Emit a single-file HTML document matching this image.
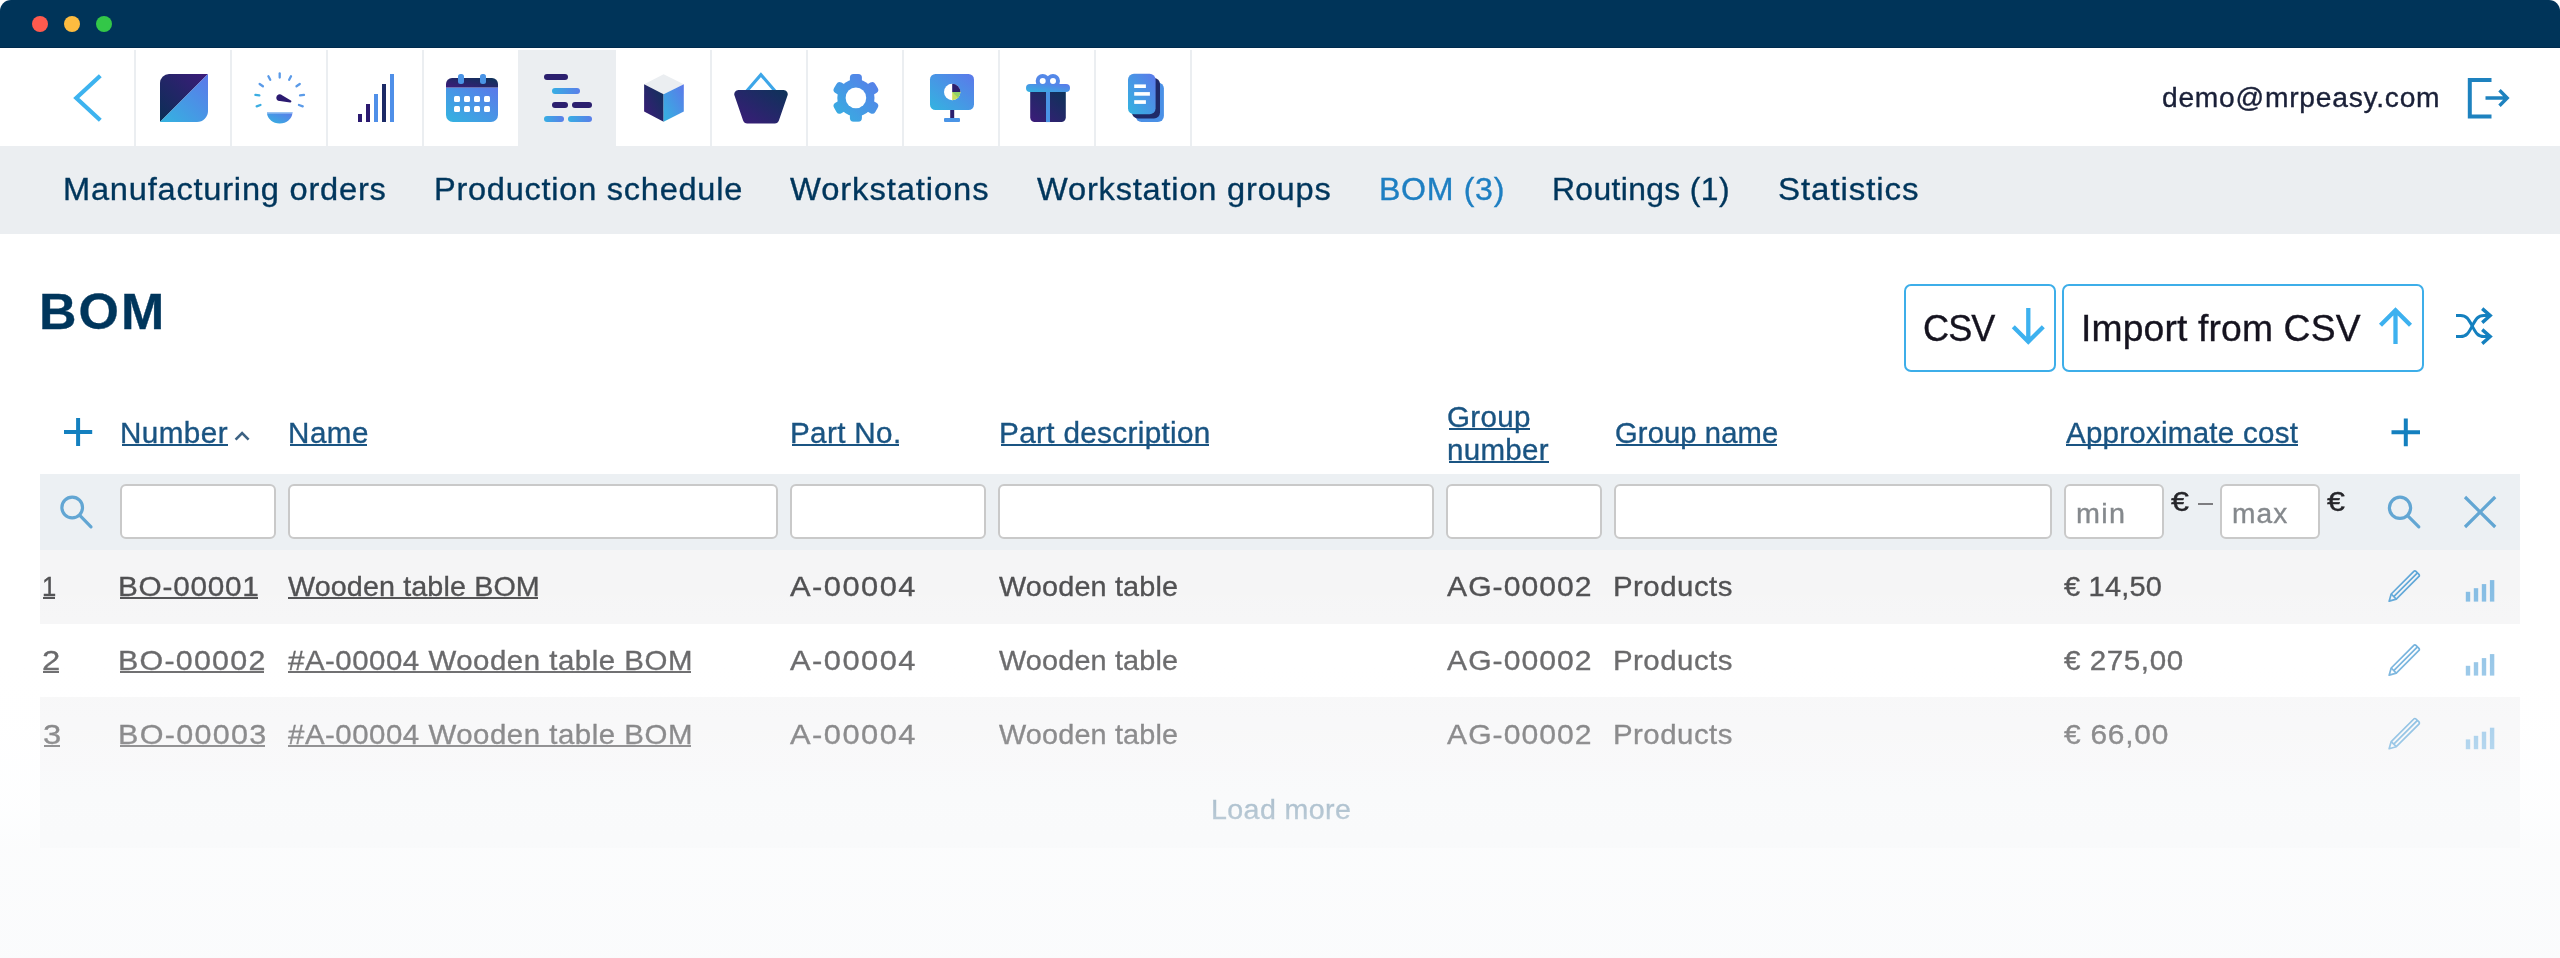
<!DOCTYPE html>
<html lang="en">
<head>
<meta charset="utf-8">
<title>BOM</title>
<style>
*{box-sizing:border-box;margin:0;padding:0}
html,body{width:2560px;height:958px;overflow:hidden;background:#fff}
body{font-family:"Liberation Sans",sans-serif;position:relative;color:#00365c}
.abs{position:absolute}
#titlebar{left:0;top:0;width:2560px;height:48px;background:#003459;border-radius:11px 11px 0 0;border-bottom:1px solid #002b4e}
.dot{width:16px;height:16px;border-radius:50%;top:16px}
#toolbar{left:0;top:48px;width:2560px;height:98px;background:#fff}
.sep{top:50px;width:2px;height:96px;background:#ebeef1}
#active{left:518px;top:50px;width:98px;height:96px;background:#ebeef1}
#nav{left:0;top:146px;width:2560px;height:88px;background:#ebeef1}
.btn{top:284px;height:88px;border:2px solid #3daee9;border-radius:7px;background:#fff}
#filter{left:40px;top:474px;width:2480px;height:76px;background:#ecf0f3}
.inp{top:484.400px;height:55px;background:#fff;border:2px solid #c9c9c9;border-radius:6px}
.row{left:40px;width:2480px;height:74px}
.t{white-space:nowrap;transform-origin:0 50%;-webkit-text-stroke:.35px currentColor}
#fade{left:0;top:540px;width:2560px;height:418px;pointer-events:none;background:linear-gradient(to bottom,rgba(255,255,255,0) 0,rgba(255,255,255,.03) 46px,rgba(255,255,255,.18) 120px,rgba(254,254,255,.36) 194px,rgba(252,253,254,.6) 270px,rgba(250,251,252,.78) 310px,rgba(250,251,252,.92) 418px)}
</style>
</head>
<body>
<div id="titlebar" class="abs"></div>
<div class="abs dot" style="left:32px;background:#ff5a4e"></div>
<div class="abs dot" style="left:64px;background:#fdbc40"></div>
<div class="abs dot" style="left:96px;background:#33c748"></div>

<div id="toolbar" class="abs"></div>
<div id="active" class="abs"></div>
<div class="abs sep" style="left:134px"></div>
<div class="abs sep" style="left:230px"></div>
<div class="abs sep" style="left:326px"></div>
<div class="abs sep" style="left:422px"></div>
<div class="abs sep" style="left:710px"></div>
<div class="abs sep" style="left:806px"></div>
<div class="abs sep" style="left:902px"></div>
<div class="abs sep" style="left:998px"></div>
<div class="abs sep" style="left:1094px"></div>
<div class="abs sep" style="left:1190px"></div>
<svg class="abs" style="left:0;top:0" width="2560" height="150" viewBox="0 0 2560 150">
<defs>
<linearGradient id="gb" x1="0" y1="1" x2="1" y2="0"><stop offset="0" stop-color="#33b4e0"/><stop offset="1" stop-color="#5c78ea"/></linearGradient>
<linearGradient id="gd" x1="0" y1="1" x2="1" y2="0"><stop offset="0" stop-color="#3d1b7a"/><stop offset="1" stop-color="#0c3358"/></linearGradient>
<linearGradient id="gd2" x1="0" y1="1" x2="1" y2="0"><stop offset="0" stop-color="#0a2f55"/><stop offset="1" stop-color="#3d1b7a"/></linearGradient>
</defs>
<!-- back -->
<polyline points="100.3,75.800 76.300,98 100.300,120.200" fill="none" stroke="#3db3ef" stroke-width="4.2" stroke-linecap="butt" stroke-linejoin="miter"/>
<!-- logo -->
<path d="M160 122V83a9 9 0 0 1 9-9h39z" fill="url(#gd2)"/>
<path d="M160 122L208 74v37a11 11 0 0 1-11 11z" fill="url(#gb)"/>
<!-- gauge -->
<g transform="translate(279.7 98)" stroke="#5a9ae8" stroke-width="2.300" stroke-linecap="round">
<line x1="0" y1="-20.5" x2="0" y2="-24.500"/>
<line x1="0" y1="-20.5" x2="0" y2="-24.500" transform="rotate(27.5)"/><line x1="0" y1="-20.5" x2="0" y2="-24.500" transform="rotate(-27.5)"/>
<line x1="0" y1="-20.5" x2="0" y2="-24.500" transform="rotate(55)"/><line x1="0" y1="-20.5" x2="0" y2="-24.500" transform="rotate(-55)"/>
<line x1="0" y1="-20.5" x2="0" y2="-24.500" transform="rotate(82.5)"/><line x1="0" y1="-20.5" x2="0" y2="-24.500" transform="rotate(-82.5)" stroke="#3bade2"/>
<line x1="0" y1="-20.5" x2="0" y2="-24.500" transform="rotate(110)"/><line x1="0" y1="-20.5" x2="0" y2="-24.500" transform="rotate(-110)" stroke="#3bade2"/>
</g>
<path d="M276.300 97.600a3.400 3.400 0 0 1 5.800-2.300l8.800 5.200a1.100 1.100 0 0 1-.8 2l-10.200-1.500a3.400 3.400 0 0 1-3.600-3.400z" fill="#2b1a70"/>
<path d="M267 112.200h25.400a12.700 11.400 0 0 1-25.400 0z" fill="url(#gb)"/>
<rect x="267" y="112" width="25.400" height="1.600" fill="#9cc4f2"/>
<!-- bars -->
<rect x="358" y="114" width="4" height="8" fill="#2b1a70"/>
<rect x="366" y="104" width="4" height="18" fill="#2b1a70"/>
<rect x="374" y="94" width="4" height="28" fill="#4f8fe8"/>
<rect x="382" y="84" width="4" height="38" fill="#1c2a66"/>
<rect x="390" y="74" width="4" height="48" fill="#4f8fe8"/>
<!-- calendar -->
<path d="M446 87.500h52v27.500a7 7 0 0 1-7 7h-38a7 7 0 0 1-7-7z" fill="url(#gb)"/>
<path d="M446 87.500v-3.500a6 6 0 0 1 6-6h40a6 6 0 0 1 6 6v3.500z" fill="url(#gd)"/>
<rect x="458" y="74" width="6" height="10" rx="2.500" fill="#4a94e6"/><rect x="480" y="74" width="6" height="10" rx="2.500" fill="#4a94e6"/>
<g fill="#fff"><rect x="454" y="96" width="6" height="6" rx="1.500"/><rect x="464" y="96" width="6" height="6" rx="1.500"/><rect x="474" y="96" width="6" height="6" rx="1.500"/><rect x="484" y="96" width="6" height="6" rx="1.500"/>
<rect x="454" y="106" width="6" height="6" rx="1.500"/><rect x="464" y="106" width="6" height="6" rx="1.500"/><rect x="474" y="106" width="6" height="6" rx="1.500"/><rect x="484" y="106" width="6" height="6" rx="1.500"/></g>
<!-- gantt -->
<g stroke-width="6" stroke-linecap="round" fill="none">
<line x1="547" y1="77" x2="565" y2="77" stroke="#2b1f6e"/>
<line x1="555" y1="91" x2="577" y2="91" stroke="url(#gbh)"/>
<line x1="555" y1="105" x2="565" y2="105" stroke="#2b1f6e"/><line x1="575" y1="105" x2="589" y2="105" stroke="#2b1f6e"/>
<line x1="547" y1="119" x2="561" y2="119" stroke="url(#gbh2)"/><line x1="571" y1="119" x2="589" y2="119" stroke="url(#gbh3)"/>
</g>
<defs>
<linearGradient id="gbh" gradientUnits="userSpaceOnUse" x1="552" y1="0" x2="580" y2="0"><stop offset="0" stop-color="#36aee3"/><stop offset="1" stop-color="#5a7ee9"/></linearGradient>
<linearGradient id="gbh2" gradientUnits="userSpaceOnUse" x1="544" y1="0" x2="564" y2="0"><stop offset="0" stop-color="#36aee3"/><stop offset="1" stop-color="#5a7ee9"/></linearGradient>
<linearGradient id="gbh3" gradientUnits="userSpaceOnUse" x1="568" y1="0" x2="592" y2="0"><stop offset="0" stop-color="#36aee3"/><stop offset="1" stop-color="#5a7ee9"/></linearGradient>
</defs>
<!-- cube -->
<path d="M663.600 74.200L683.800 84.200L663.600 94.200L644.100 84.200z" fill="#ebeef1"/>
<path d="M644.100 84.200L663.600 94.200V121.800L644.100 111.600z" fill="url(#gd)"/>
<path d="M683.800 84.200L663.600 94.200V121.800L683.800 111.600z" fill="url(#gb)"/>
<!-- basket -->
<polyline points="746.800,91 760.900,74.600 775,91" fill="none" stroke="#3da6e8" stroke-width="3.200" stroke-linejoin="miter"/>
<path d="M738.500 90h45a4.200 4.200 0 0 1 4 5.600l-8.600 25a4.500 4.500 0 0 1-4.200 3h-27.400a4.500 4.500 0 0 1-4.200-3l-8.600-25a4.200 4.200 0 0 1 4-5.600z" fill="url(#gd)"/>
<!-- gear -->
<defs><mask id="gm" maskUnits="userSpaceOnUse" x="-30" y="-30" width="60" height="60"><g fill="#fff"><circle r="18.600"/><rect x="-6" y="-23.800" width="12" height="14" rx="3.600" transform="rotate(0)"/><rect x="-6" y="-23.800" width="12" height="14" rx="3.600" transform="rotate(60)"/><rect x="-6" y="-23.800" width="12" height="14" rx="3.600" transform="rotate(120)"/><rect x="-6" y="-23.800" width="12" height="14" rx="3.600" transform="rotate(180)"/><rect x="-6" y="-23.800" width="12" height="14" rx="3.600" transform="rotate(240)"/><rect x="-6" y="-23.800" width="12" height="14" rx="3.600" transform="rotate(300)"/></g><circle r="10.300" fill="#000"/></mask></defs>
<g transform="translate(855.900 97.900)"><rect x="-24" y="-24" width="48" height="48" fill="url(#gb)" mask="url(#gm)"/></g>
<!-- presentation -->
<rect x="930" y="74" width="44" height="36" rx="5.500" fill="url(#gb)"/>
<circle cx="952.200" cy="92" r="8.200" fill="#fff"/>
<path d="M952.200 92V83.800A8.200 8.200 0 0 1 960.400 92z" fill="#2b1f6e"/>
<path d="M952.200 92H960.400A8.200 8.200 0 0 1 952.200 100.200z" fill="#c6dc5c"/>
<path d="M952.200 92H960.400A8.200 8.200 0 0 1 958 97.800z" fill="#8fd16a"/>
<rect x="950.200" y="110" width="4" height="8.500" fill="#2b1f6e"/>
<rect x="944" y="118" width="16" height="4" rx="1" fill="#4a94e6"/>
<!-- gift -->
<circle cx="1042.700" cy="81" r="5" fill="none" stroke="#5488e8" stroke-width="4"/>
<circle cx="1053" cy="81" r="5" fill="none" stroke="#5488e8" stroke-width="4"/>
<path d="M1030.200 92h35.600v25.600a4.500 4.500 0 0 1-4.500 4.500h-26.600a4.500 4.500 0 0 1-4.500-4.500z" fill="url(#gd)"/>
<rect x="1046" y="92" width="4" height="30.100" fill="#4a94e6"/>
<rect x="1026" y="84" width="44" height="8" rx="4" fill="url(#gb)"/>
<!-- docs -->
<rect x="1135.600" y="82.600" width="28.300" height="39.500" rx="6" fill="#4a90e6"/>
<rect x="1132" y="78" width="28" height="40.400" rx="6" fill="#1f2a68"/>
<rect x="1128" y="73.800" width="27.600" height="40.500" rx="6" fill="url(#gb)"/>
<g fill="#fff"><rect x="1134.200" y="84.400" width="11.700" height="3.600"/><rect x="1134.200" y="92.100" width="15.700" height="3.600"/><rect x="1134.200" y="100.200" width="11.700" height="3.700"/></g>

</svg>


<div id="nav" class="abs"></div>

<div class="abs btn" style="left:1904px;width:152px"></div>
<div class="abs btn" style="left:2062px;width:362px"></div>
<svg class="abs" style="left:1900px;top:60px" width="660" height="320" viewBox="1900 60 660 320" fill="none">
<!-- logout -->
<path d="M2491.500 80H2469.800V116.600H2491.500" stroke="#1e82bf" stroke-width="4"/>
<path d="M2485.500 98H2506.500M2499.500 90.300L2507.200 98L2499.500 105.700" stroke="#1e82bf" stroke-width="3.400"/>
<!-- download -->
<path d="M2028.300 308V340M2013.300 326.700L2028.300 341.700L2043.300 326.700" stroke="#3db1ef" stroke-width="4.300"/>
<!-- upload -->
<path d="M2395.500 344V312M2380.500 325.300L2395.500 310.300L2410.500 325.300" stroke="#3db1ef" stroke-width="4.300"/>
<!-- shuffle -->
<path d="M2456 315.400h4.500c6.500 0 8.500 4.600 11.700 10.600c3.200 6 5.200 10.600 11.700 10.600h6" stroke="#1480bf" stroke-width="3"/>
<path d="M2456 336.600h4.500c6.500 0 8.500-4.600 11.700-10.600c3.200-6 5.200-10.600 11.700-10.600h6" stroke="#1480bf" stroke-width="3"/>
<path d="M2482.200 308.600L2490.200 315.600L2482.200 322.600M2482.200 329.600L2490.200 336.600L2482.200 343.600" stroke="#1480bf" stroke-width="3.400" stroke-linejoin="miter"/>
</svg>


<svg class="abs" style="left:40px;top:400px" width="2480" height="70" viewBox="40 400 2480 70" fill="none">
<path d="M64 432H92.200M78.100 418V446" stroke="#1480bf" stroke-width="4"/>
<path d="M2391.500 432.300H2420M2405.800 418.500V446.200" stroke="#1480bf" stroke-width="4"/>
<path d="M235.600 439.600L242.100 433L248.600 439.600" stroke="#3d6283" stroke-width="2.600"/>
</svg>


<div id="filter" class="abs"></div>
<div class="abs inp" style="left:120px;width:156px"></div>
<div class="abs inp" style="left:288px;width:490px"></div>
<div class="abs inp" style="left:790px;width:196px"></div>
<div class="abs inp" style="left:998px;width:436px"></div>
<div class="abs inp" style="left:1446px;width:156px"></div>
<div class="abs inp" style="left:1614px;width:438px"></div>
<div class="abs inp" style="left:2064px;width:100px"></div>
<div class="abs inp" style="left:2220px;width:100px"></div>
<div class="abs" style="left:2198px;top:503px;width:15px;height:2px;background:#7d7d80"></div>
<svg class="abs" style="left:40px;top:474px" width="2480" height="76" viewBox="40 474 2480 76" fill="none" stroke="#62a6d3" stroke-width="3.200">
<circle cx="72.200" cy="507.500" r="10.300"/><path d="M79.800 515.300L91 526.800" stroke-linecap="round"/>
<circle cx="2400" cy="507.800" r="10.600"/><path d="M2407.800 515.800L2418.800 526.800" stroke-linecap="round"/>
<path d="M2465 497L2495.200 527M2495.200 497L2465 527"/>
</svg>


<div class="abs row" style="top:550px;background:#f5f5f6"></div>
<div class="abs row" style="top:624px;background:#fff"></div>
<div class="abs row" style="top:697px;background:#f5f5f6"></div>
<div class="abs row" style="top:771px;background:#f5f6f7;height:77px"></div>
<svg class="abs" style="left:2380px;top:560px" width="130" height="200" viewBox="2380 560 130 200" fill="none">
<g transform="translate(0 0)">
<g transform="translate(2404 586.300) rotate(-45)" stroke="#5ca5d7" stroke-width="1.700" stroke-linejoin="round"><path d="M-14.500 -3.600H17.500a1.500 1.500 0 0 1 1.500 1.500V2.100a1.500 1.500 0 0 1 -1.500 1.500H-14.500L-21 0z"/><path d="M-14.500 -3.600V3.600M-14.500 0H19"/></g>
<g fill="#82bbe3"><rect x="2465.800" y="591.800" width="4.400" height="9.800"/><rect x="2473.800" y="588.200" width="4.400" height="13.400"/><rect x="2481.800" y="584.100" width="4.400" height="17.500"/><rect x="2489.900" y="580.100" width="4.400" height="21.500"/></g>
</g>
<g transform="translate(0 74)">
<g transform="translate(2404 586.300) rotate(-45)" stroke="#5ca5d7" stroke-width="1.700" stroke-linejoin="round"><path d="M-14.500 -3.600H17.500a1.500 1.500 0 0 1 1.500 1.500V2.100a1.500 1.500 0 0 1 -1.500 1.500H-14.500L-21 0z"/><path d="M-14.500 -3.600V3.600M-14.500 0H19"/></g>
<g fill="#82bbe3"><rect x="2465.800" y="591.800" width="4.400" height="9.800"/><rect x="2473.800" y="588.200" width="4.400" height="13.400"/><rect x="2481.800" y="584.100" width="4.400" height="17.500"/><rect x="2489.900" y="580.100" width="4.400" height="21.500"/></g>
</g>
<g transform="translate(0 147.6)">
<g transform="translate(2404 586.300) rotate(-45)" stroke="#5ca5d7" stroke-width="1.700" stroke-linejoin="round"><path d="M-14.500 -3.600H17.500a1.500 1.500 0 0 1 1.500 1.500V2.100a1.500 1.500 0 0 1 -1.500 1.500H-14.500L-21 0z"/><path d="M-14.500 -3.600V3.600M-14.500 0H19"/></g>
<g fill="#82bbe3"><rect x="2465.800" y="591.800" width="4.400" height="9.800"/><rect x="2473.800" y="588.200" width="4.400" height="13.400"/><rect x="2481.800" y="584.100" width="4.400" height="17.500"/><rect x="2489.900" y="580.100" width="4.400" height="21.500"/></g>
</g>
</svg>
<div class="abs t" style="left:63.40px;top:170.46px;font-size:31px;line-height:40px;color:#00365c;letter-spacing:0.745px;transform:scaleX(1.0513)">Manufacturing orders</div>
<div class="abs t" style="left:433.50px;top:170.46px;font-size:31px;line-height:40px;color:#00365c;letter-spacing:0.719px;transform:scaleX(1.0489)">Production schedule</div>
<div class="abs t" style="left:790.00px;top:170.46px;font-size:31px;line-height:40px;color:#00365c;letter-spacing:0.857px;transform:scaleX(1.0559)">Workstations</div>
<div class="abs t" style="left:1036.80px;top:170.46px;font-size:31px;line-height:40px;color:#00365c;letter-spacing:0.761px;transform:scaleX(1.0511)">Workstation groups</div>
<div class="abs t" style="left:1378.53px;top:170.46px;font-size:31px;line-height:40px;color:#1e7fc2;letter-spacing:0.653px;transform:scaleX(1.0356)">BOM (3)</div>
<div class="abs t" style="left:1551.85px;top:170.46px;font-size:31px;line-height:40px;color:#00365c;letter-spacing:0.380px;transform:scaleX(1.0259)">Routings (1)</div>
<div class="abs t" style="left:1777.93px;top:170.46px;font-size:31px;line-height:40px;color:#00365c;letter-spacing:0.857px;transform:scaleX(1.0672)">Statistics</div>
<div class="abs t" style="left:2162.36px;top:80.74px;font-size:27px;line-height:35px;color:#1a2038;letter-spacing:0.718px;transform:scaleX(1.0446)">demo@mrpeasy.com</div>
<div class="abs t" style="left:39.39px;top:279.98px;font-size:50px;line-height:65px;color:#00365c;letter-spacing:2.023px;transform:scaleX(1.0378);font-weight:700">BOM</div>
<div class="abs t" style="left:1922.82px;top:304.98px;font-size:37px;line-height:48px;color:#15131f;letter-spacing:-0.948px;transform:scaleX(0.9755)">CSV</div>
<div class="abs t" style="left:2081.48px;top:304.98px;font-size:37px;line-height:48px;color:#15131f;letter-spacing:0.141px;transform:scaleX(1.0073)">Import from CSV</div>
<div class="abs t" style="left:120.16px;top:413.65px;font-size:29px;line-height:38px;color:#1a5482;letter-spacing:0.422px;transform:scaleX(1.0213)">Number</div>
<div class="abs" style="left:122.2px;top:443.5px;width:105.8px;height:2px;background:#1a5482"></div>
<div class="abs t" style="left:287.96px;top:413.65px;font-size:29px;line-height:38px;color:#1a5482;letter-spacing:0.502px;transform:scaleX(1.0207)">Name</div>
<div class="abs" style="left:290.0px;top:443.5px;width:77.3px;height:2px;background:#1a5482"></div>
<div class="abs t" style="left:789.95px;top:413.65px;font-size:29px;line-height:38px;color:#1a5482;letter-spacing:0.327px;transform:scaleX(1.0229)">Part No.</div>
<div class="abs" style="left:792.0px;top:443.5px;width:107.0px;height:2px;background:#1a5482"></div>
<div class="abs t" style="left:998.75px;top:413.65px;font-size:29px;line-height:38px;color:#1a5482;letter-spacing:0.320px;transform:scaleX(1.0248)">Part description</div>
<div class="abs" style="left:1000.8px;top:443.5px;width:208.2px;height:2px;background:#1a5482"></div>
<div class="abs t" style="left:1447.48px;top:397.95px;font-size:29px;line-height:38px;color:#1a5482;letter-spacing:0.335px;transform:scaleX(1.0174)">Group</div>
<div class="abs" style="left:1448.5px;top:427.8px;width:81.2px;height:2px;background:#1a5482"></div>
<div class="abs t" style="left:1447.48px;top:431.45px;font-size:29px;line-height:38px;color:#1a5482;letter-spacing:0.318px;transform:scaleX(1.0165)">number</div>
<div class="abs" style="left:1448.5px;top:461.3px;width:100.9px;height:2px;background:#1a5482"></div>
<div class="abs t" style="left:1614.79px;top:413.65px;font-size:29px;line-height:38px;color:#1a5482;letter-spacing:0.107px;transform:scaleX(1.0061)">Group name</div>
<div class="abs" style="left:1615.8px;top:443.5px;width:161.0px;height:2px;background:#1a5482"></div>
<div class="abs t" style="left:2066.20px;top:413.65px;font-size:29px;line-height:38px;color:#1a5482;letter-spacing:0.256px;transform:scaleX(1.0174)">Approximate cost</div>
<div class="abs" style="left:2066.2px;top:443.5px;width:231.8px;height:2px;background:#1a5482"></div>
<div class="abs t" style="left:2076.44px;top:497.14px;font-size:27px;line-height:35px;color:#85898d;letter-spacing:1.248px;transform:scaleX(1.0640)">min</div>
<div class="abs t" style="left:2232.46px;top:497.14px;font-size:27px;line-height:35px;color:#85898d;letter-spacing:1.006px;transform:scaleX(1.0415)">max</div>
<div class="abs t" style="left:2170.60px;top:484.30px;font-size:28px;line-height:36px;color:#26262a;letter-spacing:0.000px;transform:scaleX(1.1500)">€</div>
<div class="abs t" style="left:2327.20px;top:484.30px;font-size:28px;line-height:36px;color:#26262a;letter-spacing:0.000px;transform:scaleX(1.1500)">€</div>
<div class="abs t" style="left:1210.75px;top:792.00px;font-size:28px;line-height:36px;color:#45708f;letter-spacing:0.361px;transform:scaleX(1.0225)">Load more</div>
<div class="abs t" style="left:41.50px;top:568.12px;font-size:28.5px;line-height:37px;color:#4b4b4d;letter-spacing:0.000px;transform:scaleX(0.9000)">1</div>
<div class="abs" style="left:43.3px;top:597.3px;width:11.3px;height:2px;background:#4b4b4d"></div>
<div class="abs t" style="left:117.91px;top:568.12px;font-size:28.5px;line-height:37px;color:#4b4b4d;letter-spacing:0.742px;transform:scaleX(1.0426)">BO-00001</div>
<div class="abs" style="left:120.0px;top:597.3px;width:137.9px;height:2px;background:#4b4b4d"></div>
<div class="abs t" style="left:288.40px;top:568.12px;font-size:28.5px;line-height:37px;color:#4b4b4d;letter-spacing:0.117px;transform:scaleX(1.0072)">Wooden table BOM</div>
<div class="abs" style="left:288.4px;top:597.3px;width:250.0px;height:2px;background:#4b4b4d"></div>
<div class="abs t" style="left:790.40px;top:568.12px;font-size:28.5px;line-height:37px;color:#4b4b4d;letter-spacing:1.363px;transform:scaleX(1.0820)">A-00004</div>
<div class="abs t" style="left:998.60px;top:568.12px;font-size:28.5px;line-height:37px;color:#4b4b4d;letter-spacing:0.166px;transform:scaleX(1.0106)">Wooden table</div>
<div class="abs t" style="left:1446.50px;top:568.12px;font-size:28.5px;line-height:37px;color:#4b4b4d;letter-spacing:0.989px;transform:scaleX(1.0567)">AG-00002</div>
<div class="abs t" style="left:1612.84px;top:568.12px;font-size:28.5px;line-height:37px;color:#4b4b4d;letter-spacing:0.477px;transform:scaleX(1.0312)">Products</div>
<div class="abs t" style="left:2064.20px;top:568.12px;font-size:28.5px;line-height:37px;color:#4b4b4d;letter-spacing:0.227px;transform:scaleX(1.0147)">€ 14,50</div>
<div class="abs t" style="left:42.15px;top:641.92px;font-size:28.5px;line-height:37px;color:#4b4b4d;letter-spacing:0.000px;transform:scaleX(1.1500)">2</div>
<div class="abs" style="left:43.3px;top:671.1px;width:16.2px;height:2px;background:#4b4b4d"></div>
<div class="abs t" style="left:117.86px;top:641.92px;font-size:28.5px;line-height:37px;color:#4b4b4d;letter-spacing:1.153px;transform:scaleX(1.0678)">BO-00002</div>
<div class="abs" style="left:120.0px;top:671.1px;width:144.3px;height:2px;background:#4b4b4d"></div>
<div class="abs t" style="left:288.40px;top:641.92px;font-size:28.5px;line-height:37px;color:#4b4b4d;letter-spacing:0.497px;transform:scaleX(1.0326)">#A-00004 Wooden table BOM</div>
<div class="abs" style="left:288.4px;top:671.1px;width:402.6px;height:2px;background:#4b4b4d"></div>
<div class="abs t" style="left:790.40px;top:641.92px;font-size:28.5px;line-height:37px;color:#4b4b4d;letter-spacing:1.363px;transform:scaleX(1.0820)">A-00004</div>
<div class="abs t" style="left:998.60px;top:641.92px;font-size:28.5px;line-height:37px;color:#4b4b4d;letter-spacing:0.166px;transform:scaleX(1.0106)">Wooden table</div>
<div class="abs t" style="left:1446.50px;top:641.92px;font-size:28.5px;line-height:37px;color:#4b4b4d;letter-spacing:0.989px;transform:scaleX(1.0567)">AG-00002</div>
<div class="abs t" style="left:1612.84px;top:641.92px;font-size:28.5px;line-height:37px;color:#4b4b4d;letter-spacing:0.477px;transform:scaleX(1.0312)">Products</div>
<div class="abs t" style="left:2064.20px;top:641.92px;font-size:28.5px;line-height:37px;color:#4b4b4d;letter-spacing:0.559px;transform:scaleX(1.0368)">€ 275,00</div>
<div class="abs t" style="left:43.15px;top:715.72px;font-size:28.5px;line-height:37px;color:#4b4b4d;letter-spacing:0.000px;transform:scaleX(1.1500)">3</div>
<div class="abs" style="left:44.3px;top:744.9px;width:16.2px;height:2px;background:#4b4b4d"></div>
<div class="abs t" style="left:117.86px;top:715.72px;font-size:28.5px;line-height:37px;color:#4b4b4d;letter-spacing:1.215px;transform:scaleX(1.0717)">BO-00003</div>
<div class="abs" style="left:120.0px;top:744.9px;width:145.3px;height:2px;background:#4b4b4d"></div>
<div class="abs t" style="left:288.40px;top:715.72px;font-size:28.5px;line-height:37px;color:#4b4b4d;letter-spacing:0.497px;transform:scaleX(1.0326)">#A-00004 Wooden table BOM</div>
<div class="abs" style="left:288.4px;top:744.9px;width:402.6px;height:2px;background:#4b4b4d"></div>
<div class="abs t" style="left:790.40px;top:715.72px;font-size:28.5px;line-height:37px;color:#4b4b4d;letter-spacing:1.363px;transform:scaleX(1.0820)">A-00004</div>
<div class="abs t" style="left:998.60px;top:715.72px;font-size:28.5px;line-height:37px;color:#4b4b4d;letter-spacing:0.166px;transform:scaleX(1.0106)">Wooden table</div>
<div class="abs t" style="left:1446.50px;top:715.72px;font-size:28.5px;line-height:37px;color:#4b4b4d;letter-spacing:0.989px;transform:scaleX(1.0567)">AG-00002</div>
<div class="abs t" style="left:1612.84px;top:715.72px;font-size:28.5px;line-height:37px;color:#4b4b4d;letter-spacing:0.477px;transform:scaleX(1.0312)">Products</div>
<div class="abs t" style="left:2064.20px;top:715.72px;font-size:28.5px;line-height:37px;color:#4b4b4d;letter-spacing:0.728px;transform:scaleX(1.0486)">€ 66,00</div>
<div id="fade" class="abs"></div>
</body>
</html>
